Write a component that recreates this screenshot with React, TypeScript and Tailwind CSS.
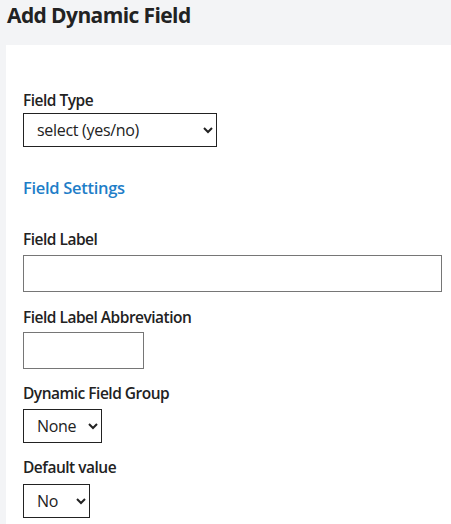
import React from 'react';

const font = { fontFamily: '"Open Sans", "Noto Sans", sans-serif' };

const labelCls = 'block text-[15.5px] font-semibold leading-[20px] tracking-[-0.5px]';
const selectCls = 'block h-[34px] border border-[#222] pl-[9px] text-[16px] tracking-[-0.3px] text-[#222]';

export default function App() {
  return (
    <div className="min-h-screen bg-[#f3f4f6] text-[#222]" style={font}>
      <h1 className="px-[7px] pt-[1px] h-[45px] text-[21px] font-bold leading-[28px] tracking-[-0.6px]">Add Dynamic Field</h1>
      <div className="ml-[6px] bg-white pl-[17px] pr-[9px] pt-[45px] pb-[10px]">
        <label className={labelCls}>Field Type</label>
        <select className={`${selectCls} mt-[3px] w-[194px]`}>
          <option>select (yes/no)</option>
        </select>

        <h2 className="mt-[31px] text-[16.5px] font-semibold leading-[20px] tracking-[-0.3px] text-[#1e7ec8]">Field Settings</h2>

        <label className={`${labelCls} mt-[31px]`}>Field Label</label>
        <input className="mt-[6px] block h-[37px] w-full border border-[#767676]" />

        <label className={`${labelCls} mt-[15px]`}>Field Label Abbreviation</label>
        <input className="mt-[5px] block h-[37px] w-[121px] border border-[#767676]" />

        <label className={`${labelCls} mt-[14px]`}>Dynamic Field Group</label>
        <select className={`${selectCls} mt-[6px] w-[79px]`}>
          <option>None</option>
        </select>

        <label className={`${labelCls} mt-[14px]`}>Default value</label>
        <select className={`${selectCls} mt-[7px] w-[67px]`}>
          <option>No</option>
        </select>
      </div>
    </div>
  );
}
